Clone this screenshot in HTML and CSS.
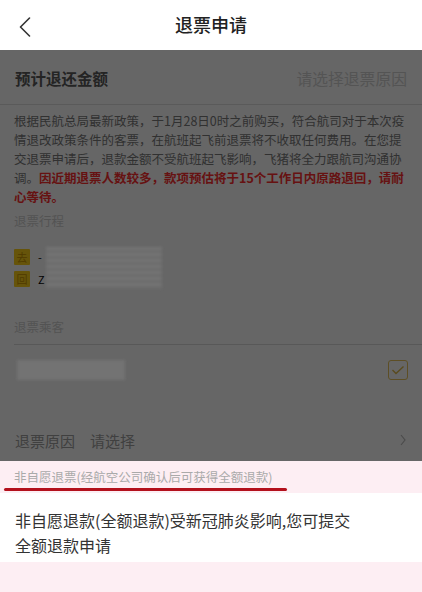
FILE: index.html
```html
<!DOCTYPE html>
<html lang="zh-CN">
<head>
  <meta charset="UTF-8">
  <meta name="viewport" content="width=device-width, initial-scale=1.0">
  <title>退票申请</title>
  <link rel="stylesheet" href="styles.css">
</head>
<body>
  <div class="app">
    <header class="nav">
      <svg class="nav-back" width="12" height="20" viewBox="0 0 12 20">
        <polyline points="10.5,1 1.5,10 10.5,19" fill="none" stroke="#333" stroke-width="1.6" stroke-linecap="round" stroke-linejoin="round"/>
      </svg>
      <h1 class="nav-title">退票申请</h1>
    </header>

    <div class="amount-row">
      <span class="amount-label">预计退还金额</span>
      <span class="amount-hint">请选择退票原因</span>
    </div>

    <p class="notice">根据民航总局最新政策，于1月28日0时之前购买，符合航司对于本次疫情退改政策条件的客票，在航班起飞前退票将不收取任何费用。在您提交退票申请后，退款金额不受航班起飞影响，飞猪将全力跟航司沟通协调。<strong class="notice-red">因近期退票人数较多，款项预估将于15个工作日内原路退回，请耐心等待。</strong></p>

    <div class="label">退票行程</div>
    <div class="trip">
      <div class="legs">
        <div class="leg"><span class="badge">去</span><span class="leg-city">-</span></div>
        <div class="leg"><span class="badge">回</span><span class="leg-city">Z</span></div>
      </div>
      <div class="redact redact-trip"></div>
    </div>

    <div class="label label-line">退票乘客</div>
    <div class="passenger">
      <div class="redact redact-name"></div>
      <span class="check">
        <svg width="14" height="10" viewBox="0 0 14 10">
          <polyline points="1.5,5 5,8.5 12.5,1.5" fill="none" stroke="#e0bb4c" stroke-width="1.4"/>
        </svg>
      </span>
    </div>

    <div class="reason-row">
      <span class="reason-label">退票原因</span>
      <span class="reason-value">请选择</span>
      <svg class="reason-arrow" width="6" height="12" viewBox="0 0 6 12">
        <polyline points="1,1 5,6 1,11" fill="none" stroke="#bbb" stroke-width="1.2"/>
      </svg>
    </div>

    <div class="mask"></div>

    <div class="sheet">
      <div class="sheet-title">
        非自愿退票(经航空公司确认后可获得全额退款)
        <span class="mark"></span>
      </div>
      <div class="sheet-option">非自愿退款(全额退款)受新冠肺炎影响,您可提交<br>全额退款申请</div>
    </div>
  </div>
</body>
</html>
```

FILE: styles.css
```css
html, body {
  margin: 0;
  padding: 0;
}
body {
  font-family: "Noto Sans CJK SC", "Noto Sans", sans-serif;
  color: #333;
}
.app {
  position: relative;
  width: 422px;
  height: 592px;
  overflow: hidden;
  background: #fff;
}

/* --- nav bar --- */
.nav {
  height: 50px;
  display: flex;
  align-items: center;
  justify-content: center;
  position: relative;
  background: #fff;
}
.nav-back {
  position: absolute;
  left: 19px;
  top: 17px;
}
.nav-title {
  margin: 0 0 2px 0;
  font-size: 18px;
  font-weight: 500;
  color: #222;
}

/* --- amount --- */
.amount-row {
  height: 55px;
  display: flex;
  align-items: center;
  justify-content: space-between;
  padding: 2px 15px 0 15px;
  border-bottom: 1px solid #e2e2e2;
  box-sizing: border-box;
}
.amount-label {
  font-size: 15.5px;
  font-weight: 700;
  color: #5a5a5a;
}
.amount-hint {
  font-size: 15.8px;
  color: #d2d2d2;
}

/* --- notice --- */
.notice {
  margin: 0;
  padding: 6px 17px 0 14px;
  font-size: 12.5px;
  line-height: 19px;
  color: #7a7a7a;
}
.notice-red {
  color: #ff2f2f;
}

/* --- sections --- */
.label {
  padding: 6px 14px 0;
  font-size: 12.5px;
  line-height: 18px;
  color: #d0d0d0;
}
.trip {
  display: flex;
  align-items: flex-start;
  padding: 17px 14px 0;
}
.legs {
  display: flex;
  flex-direction: column;
  gap: 6px;
  padding-top: 2px;
}
.leg {
  display: flex;
  align-items: center;
  height: 16px;
}
.badge {
  width: 16px;
  height: 16px;
  background: #ffd21a;
  color: #c79200;
  font-size: 11px;
  line-height: 16px;
  text-align: center;
  border-radius: 1px;
}
.leg-city {
  margin-left: 8px;
  font-size: 11px;
  color: #000;
}
.redact {
  position: relative;
  z-index: 3;
  filter: blur(1.5px);
}
.redact-trip {
  width: 116px;
  height: 42px;
  margin-left: 1px;
  background:
    repeating-linear-gradient(0deg, #6c6c6c 0px, #6c6c6c 3px, #747474 3px, #747474 6px);
}
.label-line {
  margin-top: 29px;
  margin-left: 14px;
  padding: 0 0 8px 0;
  border-bottom: 1px solid #dcdcdc;
}
.passenger {
  display: flex;
  justify-content: space-between;
  align-items: flex-start;
  padding: 15px 14px 0 17px;
  height: 21px;
}
.redact-name {
  width: 108px;
  height: 20px;
  background: #737373;
}
.check {
  width: 18px;
  height: 18px;
  border: 1.5px solid #e8c45c;
  border-radius: 3px;
  display: flex;
  align-items: center;
  justify-content: center;
}
.reason-row {
  display: flex;
  align-items: center;
  margin-top: 48px;
  padding: 0 16px 0 15px;
  height: 22px;
  font-size: 15px;
  color: #a0a0a0;
}
.reason-value {
  margin-left: 15px;
}
.reason-arrow {
  margin-left: auto;
}

/* --- overlay and sheet --- */
.mask {
  position: absolute;
  top: 50px;
  left: 0;
  right: 0;
  bottom: 0;
  background: rgba(0, 0, 0, 0.6);
  z-index: 2;
}
.sheet {
  position: absolute;
  left: 0;
  right: 0;
  bottom: 0;
  height: 131px;
  background: #fdeef3;
  z-index: 4;
}
.sheet-title {
  position: relative;
  height: 32px;
  line-height: 32px;
  padding-left: 14px;
  font-size: 12.5px;
  color: #aaa;
}
.mark {
  position: absolute;
  left: 4px;
  top: 27px;
  width: 283px;
  height: 3px;
  border-radius: 2px;
  background: #b3101c;
}
.sheet-option {
  height: 69px;
  box-sizing: border-box;
  padding: 15px 14px 0 15px;
  background: #fff;
  font-size: 16px;
  line-height: 25px;
  color: #333;
}
```
